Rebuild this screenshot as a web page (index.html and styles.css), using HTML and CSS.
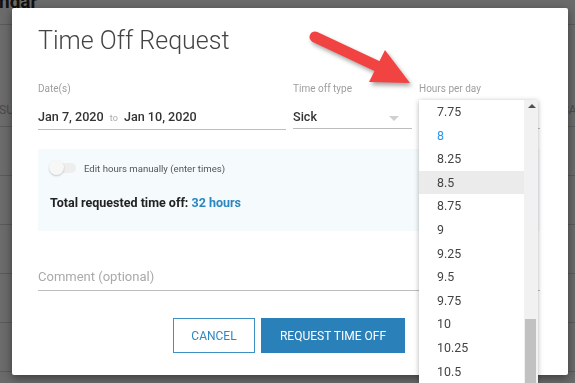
FILE: index.html
```html
<!DOCTYPE html>
<html lang="en">
<head>
    <meta charset="UTF-8">
    <meta name="viewport" content="width=device-width, initial-scale=1.0">
    <title>Time Off Request</title>
    <link rel="stylesheet" href="styles.css">
</head>
<body>
    <!-- Calendar page behind the modal -->
    <div class="page">
        <div class="page-header">ndar</div>
        <div class="page-row week-head">
            <span class="day-left">SUN</span>
            <span class="day-right">SAT</span>
        </div>
        <div class="page-row"></div>
        <div class="page-row"></div>
        <div class="page-row"></div>
        <div class="page-row"></div>
        <div class="page-row"></div>
    </div>

    <div class="dialog">
        <h1>Time Off Request</h1>

        <div class="fields">
            <div class="field">
                <label>Date(s)</label>
                <div class="value">Jan 7, 2020 <span class="to">to</span> Jan 10, 2020</div>
            </div>
            <div class="field">
                <label>Time off type</label>
                <div class="value select">Sick <span class="caret"></span></div>
            </div>
            <div class="field hours">
                <label>Hours per day</label>
                <div class="value select">8</div>

                <div class="dropdown">
                    <ul class="options">
                        <li>7.75</li>
                        <li class="selected">8</li>
                        <li>8.25</li>
                        <li class="hover">8.5</li>
                        <li>8.75</li>
                        <li>9</li>
                        <li>9.25</li>
                        <li>9.5</li>
                        <li>9.75</li>
                        <li>10</li>
                        <li>10.25</li>
                        <li>10.5</li>
                        <li>10.75</li>
                    </ul>
                    <div class="scrollbar">
                        <span class="scroll-up"></span>
                        <span class="thumb"></span>
                    </div>
                </div>
            </div>
        </div>

        <div class="summary">
            <div class="toggle-row">
                <span class="toggle"><span class="knob"></span></span>
                <span>Edit hours manually (enter times)</span>
            </div>
            <div class="total">Total requested time off: <span class="hours-total">32 hours</span></div>
        </div>

        <div class="comment">Comment (optional)</div>

        <div class="actions">
            <button class="btn btn-outline">CANCEL</button>
            <button class="btn btn-primary">REQUEST TIME OFF</button>
        </div>
    </div>

    <!-- annotation arrow -->
    <svg class="arrow" width="130" height="80" viewBox="0 0 130 80">
        <line x1="16" y1="12" x2="80" y2="42" stroke="#f24343" stroke-width="11" stroke-linecap="round"/>
        <polygon points="86,25 70,57 111,58" fill="#f24343"/>
    </svg>
</body>
</html>
```

FILE: styles.css
```css
/* General */
body {
    margin: 0;
    height: 383px;
    overflow: hidden;
    background-color: #6b6b6b;
    font-family: Roboto, "Noto Sans", sans-serif;
}

/* Page behind the modal */
.page {
    display: flex;
    flex-direction: column;
}
.page-header {
    height: 32px;
    margin-top: -7px;
    box-sizing: border-box;
    border-bottom: 1px solid #5a5a5a;
    font-size: 19px;
    font-weight: bold;
    line-height: 18px;
    color: #111;
    text-indent: -1px;
}
.page-row {
    height: 49px;
    box-sizing: border-box;
    border-bottom: 1px solid #5a5a5a;
}
.week-head {
    height: 102px;
    display: flex;
    justify-content: space-between;
    align-items: flex-end;
    padding-bottom: 9px;
    font-size: 12px;
    color: #4a4a4a;
}
.day-left {
    margin-left: -1px;
}
.day-right {
    margin-right: -8px;
}

/* Dialog */
.dialog {
    position: fixed;
    left: 12px;
    top: 8px;
    width: 556px;
    height: 367px;
    box-sizing: border-box;
    padding: 0 28px 0 26px;
    background-color: #fff;
    border-radius: 2px;
    box-shadow: 0 3px 10px rgba(0, 0, 0, 0.45);
}
.dialog h1 {
    margin: 0;
    padding-top: 18px;
    font-size: 25px;
    font-weight: 300;
    line-height: 30px;
    color: #444;
}

/* Fields */
.fields {
    display: grid;
    grid-template-columns: 248px 119px 1fr;
    column-gap: 7px;
    margin-top: 27px;
}
.field label {
    display: block;
    font-size: 10px;
    line-height: 12px;
    color: #9e9e9e;
    margin-bottom: 13px;
}
.field .value {
    font-size: 12.6px;
    font-weight: 500;
    line-height: 18px;
    color: #333;
    padding-bottom: 2px;
    border-bottom: 1px solid #bdbdbd;
}
.value .to {
    font-size: 9px;
    font-weight: 400;
    color: #aaa;
    margin: 0 3px;
}
.select {
    position: relative;
}
.caret {
    position: absolute;
    right: 13px;
    top: 8px;
    border-left: 5px solid transparent;
    border-right: 5px solid transparent;
    border-top: 5px solid #d0d0d0;
}
.hours {
    position: relative;
}

/* Dropdown */
.dropdown {
    position: absolute;
    left: 0;
    top: 17px;
    width: 119px;
    height: 290px;
    overflow: hidden;
    background-color: #fff;
    box-shadow: 0 1px 5px rgba(0, 0, 0, 0.3);
    display: flex;
}
.options {
    list-style: none;
    margin: 0;
    padding: 0;
    flex: 1;
}
.options li {
    height: 23.6px;
    line-height: 23.6px;
    padding-left: 18px;
    font-size: 12.4px;
    color: #444;
}
.options li.selected {
    color: #2f95e8;
}
.options li.hover {
    background-color: #ebebeb;
}
.scrollbar {
    width: 14px;
    background-color: #f1f1f1;
    position: relative;
}
.scroll-up {
    position: absolute;
    left: 4px;
    top: 4px;
    border-left: 4px solid transparent;
    border-right: 4px solid transparent;
    border-bottom: 4px solid #505050;
}
.thumb {
    position: absolute;
    left: 1px;
    right: 2px;
    top: 219px;
    height: 90px;
    background-color: #c1c1c1;
}

/* Summary box */
.summary {
    margin-top: 19px;
    height: 82px;
    box-sizing: border-box;
    padding: 11px 12px 0;
    background-color: #f5fafd;
}
.toggle-row {
    display: flex;
    align-items: center;
    height: 16px;
    font-size: 9.6px;
    color: #555;
}
.toggle {
    position: relative;
    width: 26px;
    height: 10px;
    margin-right: 8px;
    border-radius: 5px;
    background-color: #eeeeee;
}
.knob {
    position: absolute;
    left: -1px;
    top: -3px;
    width: 15px;
    height: 15px;
    border-radius: 50%;
    background-color: #f7f7f7;
    box-shadow: 0 1px 2px rgba(0, 0, 0, 0.2);
}
.total {
    margin-top: 19px;
    font-size: 12.5px;
    font-weight: bold;
    line-height: 16px;
    color: #222;
}
.hours-total {
    color: #2b86c0;
}

/* Comment */
.comment {
    margin-top: 38px;
    font-size: 13px;
    line-height: 16px;
    color: #aaa;
    padding-bottom: 5px;
    border-bottom: 1px solid #bdbdbd;
}

/* Buttons */
.actions {
    display: flex;
    justify-content: center;
    gap: 6px;
    margin-top: 27px;
}
.btn {
    height: 35px;
    font-family: Roboto, "Noto Sans", sans-serif;
    font-size: 12px;
    cursor: pointer;
}
.btn-outline {
    width: 82px;
    background-color: #fff;
    border: 1px solid #3d8fc6;
    color: #2f87c2;
}
.btn-primary {
    width: 144px;
    background-color: #2a81ba;
    border: 1px solid #2a81ba;
    color: #fff;
}

/* Annotation */
.arrow {
    position: fixed;
    left: 299px;
    top: 25px;
    filter: drop-shadow(2px 3px 2px rgba(0, 0, 0, 0.35));
}
```
